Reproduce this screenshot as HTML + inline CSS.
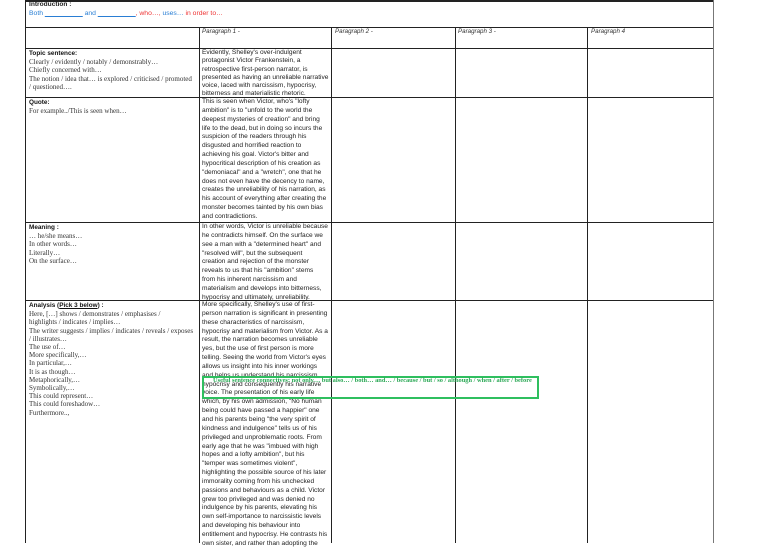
<!DOCTYPE html>
<html><head><meta charset="utf-8"><style>
body{margin:0;width:768px;height:543px;background:#fff;position:relative;overflow:hidden;font-family:"Liberation Sans",sans-serif}
.h{position:absolute;height:1px;background:#222}
.v{position:absolute;width:1px;background:#222}
.t{position:absolute;white-space:nowrap;font-size:6.6px;line-height:8.85px;color:#222}
.s{position:absolute;white-space:nowrap;font-family:"Liberation Serif",serif;font-size:7px;line-height:8.2px;color:#333}
.s b{font-family:"Liberation Sans",sans-serif;font-size:6.4px;color:#111}
.i{font-style:italic;font-size:6.2px;color:#333}
</style></head><body>
<div class="h" style="left:25px;top:0;width:689px;height:2px"></div>
<div class="h" style="left:25px;top:27px;width:689px"></div>
<div class="h" style="left:25px;top:48px;width:689px"></div>
<div class="h" style="left:25px;top:97px;width:689px"></div>
<div class="h" style="left:25px;top:222px;width:689px"></div>
<div class="h" style="left:25px;top:300px;width:689px"></div>
<div class="v" style="left:25px;top:0;height:543px"></div>
<div class="v" style="left:713px;top:0;height:543px;background:#777"></div>
<div class="v" style="left:199px;top:27px;height:516px"></div>
<div class="v" style="left:331px;top:27px;height:516px"></div>
<div class="v" style="left:455px;top:27px;height:516px"></div>
<div class="v" style="left:587px;top:27px;height:516px"></div>

<div class="t" style="left:29px;top:1px;font-weight:bold;font-size:6.6px">Introduction :</div>
<div class="t" style="left:29px;top:10px;color:#2a7fd4;font-size:6.8px">Both <u>__________</u> and <u>__________</u><span style="color:#e33">, who…, </span>uses… <span style="color:#e33">in order to…</span></div>

<div class="t i" style="left:202px;top:28px">Paragraph 1 -</div>
<div class="t i" style="left:335px;top:28px">Paragraph 2 -</div>
<div class="t i" style="left:458px;top:28px">Paragraph 3 -</div>
<div class="t i" style="left:591px;top:28px">Paragraph 4</div>

<div class="s" style="left:29px;top:49px"><b>Topic sentence:</b><br>Clearly / evidently / notably / demonstrably…<br>Chiefly concerned with…<br>The notion / idea that… is explored / criticised / promoted<br>/ questioned….</div>
<div class="s" style="left:29px;top:98px"><b>Quote:</b><br>For example../This is seen when…</div>
<div class="s" style="left:29px;top:223px"><b>Meaning :</b><br>… he/she means…<br>In other words…<br>Literally…<br>On the surface…</div>
<div class="s" style="left:29px;top:301px"><b>Analysis (<u>Pick 3 below</u>) :</b><br>Here, […] shows / demonstrates / emphasises /<br>highlights / indicates / implies…<br>The writer suggests / implies / indicates / reveals / exposes<br>/ illustrates…<br>The use of…<br>More specifically,…<br>In particular,…<br>It is as though…<br>Metaphorically,…<br>Symbolically,…<br>This could represent…<br>This could foreshadow…<br>Furthermore..,</div>

<div class="t" style="left:202px;top:49px;line-height:8.3px">Evidently, Shelley's over-indulgent<br>protagonist Victor Frankenstein, a<br>retrospective first-person narrator, is<br>presented as having an unreliable narrative<br>voice, laced with narcissism, hypocrisy,<br>bitterness and materialistic rhetoric.</div>
<div class="t" style="left:202px;top:98px">This is seen when Victor, who's "lofty<br>ambition" is to "unfold to the world the<br>deepest mysteries of creation" and bring<br>life to the dead, but in doing so incurs the<br>suspicion of the readers through his<br>disgusted and horrified reaction to<br>achieving his goal. Victor's bitter and<br>hypocritical description of his creation as<br>"demoniacal" and a "wretch", one that he<br>does not even have the decency to name,<br>creates the unreliability of his narration, as<br>his account of everything after creating the<br>monster becomes tainted by his own bias<br>and contradictions.</div>
<div class="t" style="left:202px;top:223px">In other words, Victor is unreliable because<br>he contradicts himself. On the surface we<br>see a man with a "determined heart" and<br>"resolved will", but the subsequent<br>creation and rejection of the monster<br>reveals to us that his "ambition" stems<br>from his inherent narcissism and<br>materialism and develops into bitterness,<br>hypocrisy and ultimately, unreliability.</div>
<div class="t" style="left:202px;top:301px">More specifically, Shelley's use of first-<br>person narration is significant in presenting<br>these characteristics of narcissism,<br>hypocrisy and materialism from Victor. As a<br>result, the narration becomes unreliable<br>yes, but the use of first person is more<br>telling. Seeing the world from Victor's eyes<br>allows us insight into his inner workings<br>and helps us understand his narcissism,<br>hypocrisy and consequently his narrative<br>voice. The presentation of his early life<br>which, by his own admission, "No human<br>being could have passed a happier" one<br>and his parents being "the very spirit of<br>kindness and indulgence" tells us of his<br>privileged and unproblematic roots. From<br>early age that he was "imbued with high<br>hopes and a lofty ambition", but his<br>"temper was sometimes violent",<br>highlighting the possible source of his later<br>immorality coming from his unchecked<br>passions and behaviours as a child. Victor<br>grew too privileged and was denied no<br>indulgence by his parents, elevating his<br>own self-importance to narcissistic levels<br>and developing his behaviour into<br>entitlement and hypocrisy. He contrasts his<br>own sister, and rather than adopting the</div>

<div style="position:absolute;left:202px;top:376px;width:333px;height:19px;border:2px solid #2fbf5f"></div>
<div class="s" style="left:213px;top:377px;color:#2aa855;font-weight:bold;font-size:6.4px">Useful sentence connectives: not only… but also… / both… and… / because / but / so / although / when / after / before</div>
</body></html>
